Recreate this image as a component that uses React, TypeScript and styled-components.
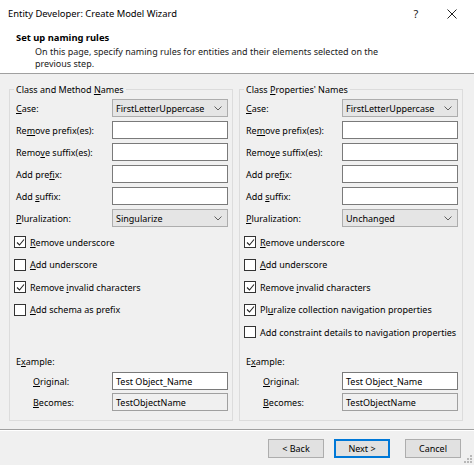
import React from 'react'
import styled, { createGlobalStyle } from 'styled-components'

const GlobalStyle = createGlobalStyle`
  html, body {
    margin: 0;
    padding: 0;
    background: #f0f0f0;
  }
  body {
    font-family: 'Noto Sans', 'Liberation Sans', sans-serif;
    font-size: 9px;
    color: #000;
  }
  * { box-sizing: border-box; }
`

type FieldRow = { label: React.ReactNode; kind: 'combo' | 'text'; value?: string }
type Check = { label: React.ReactNode; checked: boolean }

const K = ({ children }: { children: string }) => <Key>{children}</Key>

const leftRows: FieldRow[] = [
  { label: <><K>C</K>ase:</>, kind: 'combo', value: 'FirstLetterUppercase' },
  { label: <>Re<K>m</K>ove prefix(es):</>, kind: 'text' },
  { label: <>Remo<K>v</K>e suffix(es):</>, kind: 'text' },
  { label: <>Add pre<K>f</K>ix:</>, kind: 'text' },
  { label: <>Add <K>s</K>uffix:</>, kind: 'text' },
  { label: <><K>P</K>luralization:</>, kind: 'combo', value: 'Singularize' }
]

const rightRows: FieldRow[] = [
  { label: <><K>C</K>ase:</>, kind: 'combo', value: 'FirstLetterUppercase' },
  { label: <>Re<K>m</K>ove prefix(es):</>, kind: 'text' },
  { label: <>Remo<K>v</K>e suffix(es):</>, kind: 'text' },
  { label: <>Add pre<K>f</K>ix:</>, kind: 'text' },
  { label: <>Add <K>s</K>uffix:</>, kind: 'text' },
  { label: <><K>P</K>luralization:</>, kind: 'combo', value: 'Unchanged' }
]

const leftChecks: Check[] = [
  { label: <><K>R</K>emove underscore</>, checked: true },
  { label: <><K>A</K>dd underscore</>, checked: false },
  { label: <>Remove <K>i</K>nvalid characters</>, checked: true },
  { label: <><K>A</K>dd schema as prefix</>, checked: false }
]

const rightChecks: Check[] = [
  { label: <><K>R</K>emove underscore</>, checked: true },
  { label: <><K>A</K>dd underscore</>, checked: false },
  { label: <>Remove <K>i</K>nvalid characters</>, checked: true },
  { label: <>Pl<K>u</K>ralize collection navigation properties</>, checked: true },
  { label: <>Add constraint details to navigation properties</>, checked: false }
]

function Chevron() {
  return (
    <svg width="8" height="5" viewBox="0 0 8 5">
      <path d="M0.5 0.5 L4 4 L7.5 0.5" fill="none" stroke="#606060" strokeWidth="1" />
    </svg>
  )
}

function CheckMark() {
  return (
    <svg width="9" height="9" viewBox="0 0 9 9">
      <path d="M1 4.5 L3.5 7 L8 1.5" fill="none" stroke="#222" strokeWidth="1.1" />
    </svg>
  )
}

function NamingGroup({ title, rows, checks }: { title: React.ReactNode; rows: FieldRow[]; checks: Check[] }) {
  return (
    <Group>
      <Legend>{title}</Legend>
      <FieldGrid>
        {rows.map((r, i) => (
          <React.Fragment key={i}>
            <Label>{r.label}</Label>
            {r.kind === 'combo' ? (
              <Combo>
                <span>{r.value}</span>
                <Chevron />
              </Combo>
            ) : (
              <TextBox />
            )}
          </React.Fragment>
        ))}
      </FieldGrid>
      <CheckList>
        {checks.map((c, i) => (
          <CheckRow key={i}>
            <Box>{c.checked && <CheckMark />}</Box>
            <span>{c.label}</span>
          </CheckRow>
        ))}
      </CheckList>
      <Example>
        <Label>
          E<K>x</K>ample:
        </Label>
        <ExampleGrid>
          <Label>
            <K>O</K>riginal:
          </Label>
          <TextBox>Test Object_Name</TextBox>
          <Label>
            <K>B</K>ecomes:
          </Label>
          <TextBox $readOnly>TestObjectName</TextBox>
        </ExampleGrid>
      </Example>
    </Group>
  )
}

export default function App() {
  return (
    <Window>
      <GlobalStyle />
      <TitleBar>
        <Title>Entity Developer: Create Model Wizard</Title>
        <TitleButtons>
          <TitleButton>?</TitleButton>
          <TitleButton>
            <svg width="10" height="10" viewBox="0 0 10 10">
              <path d="M0.5 0.5 L9.5 9.5 M9.5 0.5 L0.5 9.5" stroke="#222" strokeWidth="1" />
            </svg>
          </TitleButton>
        </TitleButtons>
      </TitleBar>
      <Header>
        <HeaderTitle>Set up naming rules</HeaderTitle>
        <HeaderText>
          On this page, specify naming rules for entities and their elements selected on the
          <br />
          previous step.
        </HeaderText>
      </Header>
      <Body>
        <NamingGroup
          title={
            <>
              Class and Method <K>N</K>ames
            </>
          }
          rows={leftRows}
          checks={leftChecks}
        />
        <NamingGroup
          title={
            <>
              Class <K>P</K>roperties' Names
            </>
          }
          rows={rightRows}
          checks={rightChecks}
        />
      </Body>
      <Footer>
        <Button>&lt; Back</Button>
        <Button $default>Next &gt;</Button>
        <Button $spaced>Cancel</Button>
        <Grip>
          <svg width="8" height="8" viewBox="0 0 8 8">
            <rect x="6" y="0" width="2" height="2" fill="#b8b8b8" />
            <rect x="3" y="3" width="2" height="2" fill="#b8b8b8" />
            <rect x="6" y="3" width="2" height="2" fill="#b8b8b8" />
            <rect x="0" y="6" width="2" height="2" fill="#b8b8b8" />
            <rect x="3" y="6" width="2" height="2" fill="#b8b8b8" />
            <rect x="6" y="6" width="2" height="2" fill="#b8b8b8" />
          </svg>
        </Grip>
      </Footer>
    </Window>
  )
}

const Key = styled.u`
  text-decoration: underline;
  text-underline-offset: 1px;
`

const Window = styled.div`
  width: 474px;
  height: 465px;
  display: flex;
  flex-direction: column;
  background: #f0f0f0;
  overflow: hidden;
`

const TitleBar = styled.div`
  height: 27px;
  display: flex;
  align-items: center;
  justify-content: space-between;
  background: #fff;
  padding: 0 4px 0 8px;
`

const Title = styled.div`
  font-size: 9.4px;
  color: #000;
`

const TitleButtons = styled.div`
  display: flex;
  height: 100%;
`

const TitleButton = styled.div`
  width: 36px;
  display: flex;
  align-items: center;
  justify-content: center;
  font-size: 11px;
  color: #222;
`

const Header = styled.div`
  background: #fff;
  padding: 4px 0 3px 16px;
  border-bottom: 1px solid #a0a0a0;
`

const HeaderTitle = styled.div`
  font-weight: bold;
  font-size: 9.4px;
  line-height: 14px;
`

const HeaderText = styled.div`
  margin-top: 1px;
  padding-left: 19px;
  line-height: 12px;
  color: #1a1a1a;
`

const Body = styled.div`
  flex: 1;
  display: flex;
  gap: 6px;
  padding: 9px 11px 8px 9px;
`

const Group = styled.fieldset`
  flex: 1;
  min-width: 0;
  margin: 0;
  display: flex;
  flex-direction: column;
  border: 1px solid #dcdcdc;
  padding: 3px 4px 9px 6px;
`

const Legend = styled.legend`
  padding: 0 2px;
  margin-left: -2px;
  line-height: 13px;
`

const FieldGrid = styled.div`
  display: grid;
  grid-template-columns: 1fr 116px;
  grid-auto-rows: 18px;
  row-gap: 4px;
  align-items: center;
`

const Label = styled.div`
  white-space: nowrap;
`

const Combo = styled.div`
  height: 18px;
  display: flex;
  align-items: center;
  justify-content: space-between;
  padding: 0 5px 0 3px;
  background: #e5e5e5;
  border: 1px solid #adadad;
`

const TextBox = styled.div<{ $readOnly?: boolean }>`
  height: 18px;
  display: flex;
  align-items: center;
  padding-left: 3px;
  background: ${({ $readOnly }) => ($readOnly ? '#f0f0f0' : '#fff')};
  border: 1px solid ${({ $readOnly }) => ($readOnly ? '#a0a0a0' : '#7a7a7a')};
`

const CheckList = styled.div`
  margin-top: 4px;
  display: flex;
  flex-direction: column;
`

const CheckRow = styled.div`
  height: 22.5px;
  display: flex;
  align-items: center;
  gap: 4px;
  margin-left: -2px;
  white-space: nowrap;
`

const Box = styled.span`
  width: 12px;
  height: 12px;
  flex: none;
  display: flex;
  align-items: center;
  justify-content: center;
  background: #fff;
  border: 1px solid #333;
`

const Example = styled.div`
  margin-top: auto;
  display: flex;
  flex-direction: column;
  gap: 4px;
`

const ExampleGrid = styled.div`
  display: grid;
  grid-template-columns: 1fr 116px;
  grid-auto-rows: 18px;
  row-gap: 3px;
  align-items: center;
  padding-left: 17px;
`

const Footer = styled.div`
  height: 36px;
  position: relative;
  display: flex;
  align-items: flex-start;
  justify-content: flex-end;
  gap: 10px;
  padding: 9px 13px 0 0;
  border-top: 1px solid #a0a0a0;
  box-shadow: inset 0 1px 0 #fff;
`

const Button = styled.div<{ $default?: boolean; $spaced?: boolean }>`
  width: 56px;
  height: 19px;
  display: flex;
  align-items: center;
  justify-content: center;
  background: #e1e1e1;
  border: 1px solid ${({ $default }) => ($default ? '#0078d7' : '#adadad')};
  box-shadow: ${({ $default }) => ($default ? 'inset 0 0 0 1px #0078d7' : 'none')};
  margin-left: ${({ $spaced }) => ($spaced ? '5px' : '0')};
`

const Grip = styled.div`
  position: absolute;
  right: 2px;
  bottom: 2px;
  display: flex;
`
